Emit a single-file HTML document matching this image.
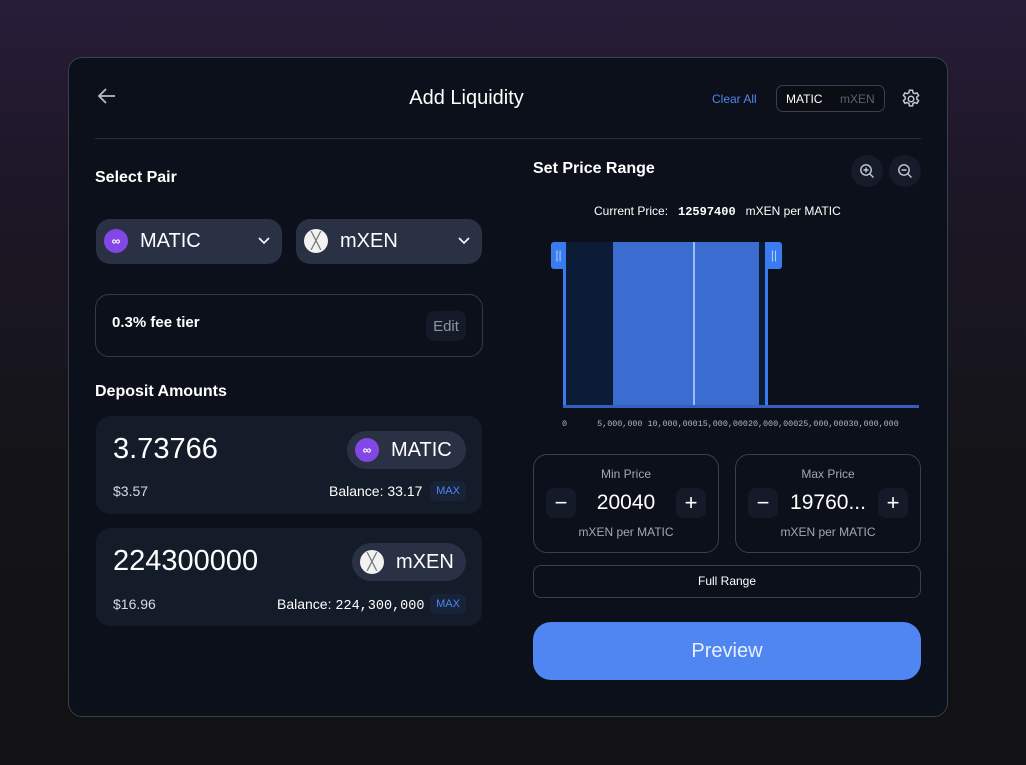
<!DOCTYPE html>
<html><head><style>
*{margin:0;padding:0;box-sizing:border-box}
body{width:1026px;height:765px;overflow:hidden;font-family:"Liberation Sans",sans-serif;color:#fff;background:linear-gradient(180deg,#281c38 0%,#1c1726 25%,#141418 60%,#121214 100%);position:relative}
.a{position:absolute}
.card{left:68px;top:57px;width:880px;height:660px;background:#0c101a;border:1px solid #3a3f4b;border-radius:14px}
.pill{background:#2a3144;border-radius:14px}
.box{background:#141b29;border-radius:14px}
.mono{font-family:"Liberation Mono",monospace}
.btn{background:#141a27;border-radius:8px;color:#cfd3dc;display:flex;align-items:center;justify-content:center}
.matic{width:24px;height:24px;border-radius:50%;background:#8247e5;display:flex;align-items:center;justify-content:center}
.xen{width:24px;height:24px;border-radius:50%;background:#f2f2f2;display:flex;align-items:center;justify-content:center}
</style></head><body>
<div class="a card"></div>
<svg class="a" style="left:96px;top:86px" width="22" height="20" viewBox="0 0 22 20"><path d="M19 10H3M10 3L3 10l7 7" stroke="#b9bcc6" stroke-width="1.8" fill="none"/></svg>
<div class="a" style="left:0;width:933px;top:87px;text-align:center;font-size:20px">Add Liquidity</div>
<div class="a" style="left:712px;top:92px;font-size:12px;color:#4f86ee">Clear All</div>
<div class="a" style="left:776px;top:85px;width:109px;height:27px;border:1px solid #3a3f4b;border-radius:7px;background:#0a0d14"></div>
<div class="a" style="left:786px;top:92px;font-size:12px">MATIC</div>
<div class="a" style="left:840px;top:92px;font-size:12px;color:#586174">mXEN</div>
<svg class="a" style="left:900px;top:88px" width="22" height="22" viewBox="0 0 24 24" fill="none" stroke="#c5c9d2" stroke-width="1.6"><circle cx="12" cy="12" r="3"/><path d="M10.3 2.5h3.4l.5 2.6 1.9 1.1 2.5-.9 1.7 2.9-2 1.7v2.2l2 1.7-1.7 2.9-2.5-.9-1.9 1.1-.5 2.6h-3.4l-.5-2.6-1.9-1.1-2.5.9-1.7-2.9 2-1.7v-2.2l-2-1.7 1.7-2.9 2.5.9 1.9-1.1z"/></svg>
<div class="a" style="left:95px;top:138px;width:826px;height:1px;background:#2b303b"></div>

<div class="a" style="left:95px;top:169px;font-size:16px;font-weight:bold">Select Pair</div>
<div class="a pill" style="left:96px;top:219px;width:186px;height:45px"></div>
<div class="a matic" style="left:104px;top:229px"><span style="font-size:12px;font-weight:bold">∞</span></div>
<div class="a" style="left:140px;top:230px;font-size:20px">MATIC</div>
<svg class="a" style="left:258px;top:237px" width="12" height="8"><path d="M1 1l5 5 5-5" stroke="#fff" stroke-width="1.6" fill="none"/></svg>
<div class="a pill" style="left:296px;top:219px;width:186px;height:45px"></div>
<div class="a xen" style="left:304px;top:229px"><span style="color:#777;font-size:16px">╳</span></div>
<div class="a" style="left:340px;top:230px;font-size:20px">mXEN</div>
<svg class="a" style="left:458px;top:237px" width="12" height="8"><path d="M1 1l5 5 5-5" stroke="#fff" stroke-width="1.6" fill="none"/></svg>

<div class="a" style="left:95px;top:294px;width:388px;height:63px;border:1px solid #353a46;border-radius:14px"></div>
<div class="a" style="left:112px;top:314px;font-size:15px;font-weight:bold">0.3% fee tier</div>
<div class="a btn" style="left:426px;top:311px;width:40px;height:30px;font-size:15px;color:#8d94a3">Edit</div>

<div class="a" style="left:95px;top:383px;font-size:16px;font-weight:bold">Deposit Amounts</div>
<div class="a box" style="left:96px;top:416px;width:386px;height:98px"></div>
<div class="a" style="left:113px;top:433px;font-size:29px">3.73766</div>
<div class="a pill" style="left:347px;top:431px;width:119px;height:38px;border-radius:19px"></div>
<div class="a matic" style="left:355px;top:438px"><span style="font-size:12px;font-weight:bold">∞</span></div>
<div class="a" style="left:391px;top:439px;font-size:20px">MATIC</div>
<div class="a" style="left:113px;top:483px;font-size:14px;color:#d6d9e0">$3.57</div>
<div class="a" style="left:329px;top:483px;font-size:14px">Balance: 33.17</div>
<div class="a" style="left:430px;top:481px;width:36px;height:20px;background:#18233a;border-radius:6px;font-size:11px;color:#4f86ee;text-align:center;line-height:20px">MAX</div>

<div class="a box" style="left:96px;top:528px;width:386px;height:98px"></div>
<div class="a" style="left:113px;top:545px;font-size:29px">224300000</div>
<div class="a pill" style="left:352px;top:543px;width:114px;height:38px;border-radius:19px"></div>
<div class="a xen" style="left:360px;top:550px"><span style="color:#777;font-size:16px">╳</span></div>
<div class="a" style="left:396px;top:551px;font-size:20px">mXEN</div>
<div class="a" style="left:113px;top:596px;font-size:14px;color:#d6d9e0">$16.96</div>
<div class="a" style="left:277px;top:596px;font-size:14px">Balance: <span class="mono" style="font-size:13.5px">224,300,000</span></div>
<div class="a" style="left:430px;top:594px;width:36px;height:20px;background:#18233a;border-radius:6px;font-size:11px;color:#4f86ee;text-align:center;line-height:20px">MAX</div>

<div class="a" style="left:533px;top:160px;font-size:16px;font-weight:bold">Set Price Range</div>
<div class="a" style="left:851px;top:155px;width:32px;height:32px;border-radius:50%;background:#151b28"></div>
<div class="a" style="left:889px;top:155px;width:32px;height:32px;border-radius:50%;background:#151b28"></div>
<svg class="a" style="left:859px;top:163px" width="16" height="16" viewBox="0 0 16 16" fill="none" stroke="#c5c9d2" stroke-width="1.4"><circle cx="7" cy="7" r="5.2"/><path d="M11 11l3.5 3.5M7 4.5v5M4.5 7h5"/></svg>
<svg class="a" style="left:897px;top:163px" width="16" height="16" viewBox="0 0 16 16" fill="none" stroke="#c5c9d2" stroke-width="1.4"><circle cx="7" cy="7" r="5.2"/><path d="M11 11l3.5 3.5M4.5 7h5"/></svg>
<div class="a" style="left:594px;top:204px;font-size:12px">Current Price:&nbsp;&nbsp;&nbsp;<b class="mono">12597400</b>&nbsp;&nbsp;&nbsp;mXEN per MATIC</div>

<div class="a" style="left:566px;top:242px;width:47px;height:165px;background:#0d1c36"></div>
<div class="a" style="left:613px;top:242px;width:146px;height:165px;background:#3b6cd0"></div>
<div class="a" style="left:693px;top:242px;width:2px;height:165px;background:#9cbcf3"></div>
<div class="a" style="left:759px;top:242px;width:6px;height:165px;background:#0d1c36"></div>
<div class="a" style="left:563px;top:242px;width:3px;height:166px;background:#3a7bf0"></div>
<div class="a" style="left:765px;top:242px;width:3px;height:166px;background:#3a7bf0"></div>
<div class="a" style="left:563px;top:405px;width:356px;height:3px;background:#3560c0"></div>
<div class="a" style="left:551px;top:242px;width:15px;height:27px;background:#3a7bf0;border-radius:3px;color:#bcd3ff;font-size:12px;text-align:center;line-height:27px">||</div>
<div class="a" style="left:766px;top:242px;width:16px;height:27px;background:#3a7bf0;border-radius:3px;color:#bcd3ff;font-size:12px;text-align:center;line-height:27px">||</div>
<div class="a mono" style="left:562px;top:419px;font-size:8.4px;color:#b4b8c2;white-space:pre">0      5,000,000 10,000,00015,000,00020,000,00025,000,00030,000,000</div>

<div class="a" style="left:533px;top:454px;width:186px;height:99px;border:1px solid #3a3f4b;border-radius:14px"></div>
<div class="a" style="left:533px;top:467px;width:186px;text-align:center;font-size:12px;color:#a2a7b3">Min Price</div>
<div class="a btn" style="left:546px;top:488px;width:30px;height:30px;font-size:22px;color:#fff">−</div>
<div class="a btn" style="left:676px;top:488px;width:30px;height:30px;font-size:22px;color:#fff">+</div>
<div class="a" style="left:533px;top:491px;width:186px;text-align:center;font-size:21px">20040</div>
<div class="a" style="left:533px;top:525px;width:186px;text-align:center;font-size:12px;color:#a2a7b3">mXEN per MATIC</div>

<div class="a" style="left:735px;top:454px;width:186px;height:99px;border:1px solid #3a3f4b;border-radius:14px"></div>
<div class="a" style="left:735px;top:467px;width:186px;text-align:center;font-size:12px;color:#a2a7b3">Max Price</div>
<div class="a btn" style="left:748px;top:488px;width:30px;height:30px;font-size:22px;color:#fff">−</div>
<div class="a btn" style="left:878px;top:488px;width:30px;height:30px;font-size:22px;color:#fff">+</div>
<div class="a" style="left:735px;top:491px;width:186px;text-align:center;font-size:21px">19760...</div>
<div class="a" style="left:735px;top:525px;width:186px;text-align:center;font-size:12px;color:#a2a7b3">mXEN per MATIC</div>

<div class="a" style="left:533px;top:565px;width:388px;height:33px;border:1px solid #3a3f4b;border-radius:8px;text-align:center;line-height:31px;font-size:12px">Full Range</div>
<div class="a" style="left:533px;top:622px;width:388px;height:58px;background:#4f86f2;border-radius:18px;text-align:center;line-height:58px;font-size:20px;color:#e8efff">Preview</div>
</body></html>
